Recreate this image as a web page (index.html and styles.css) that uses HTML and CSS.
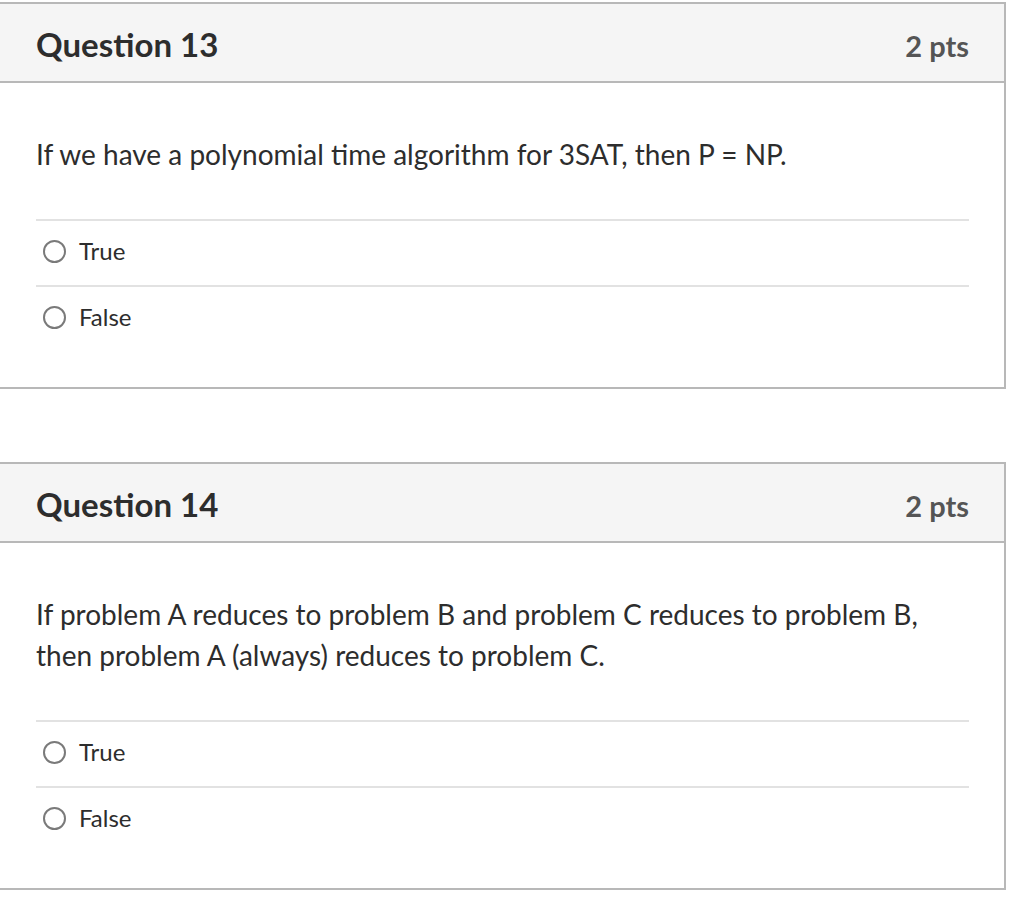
FILE: index.html
```html
<!DOCTYPE html>
<html lang="en">
<head>
<meta charset="utf-8">
<title>Quiz</title>
<link rel="stylesheet" href="styles.css">
</head>
<body>
<main class="quiz">
  <section class="question">
    <header class="question-header">
      <h2 class="question-title">Question 13</h2>
      <span class="question-points">2 pts</span>
    </header>
    <div class="question-body">
      <p class="question-text">If we have a polynomial time algorithm for 3SAT, then P = NP.</p>
      <ul class="answers">
        <li class="answer"><span class="radio"></span><span class="answer-label">True</span></li>
        <li class="answer"><span class="radio"></span><span class="answer-label">False</span></li>
      </ul>
    </div>
  </section>

  <section class="question">
    <header class="question-header">
      <h2 class="question-title">Question 14</h2>
      <span class="question-points">2 pts</span>
    </header>
    <div class="question-body">
      <p class="question-text">If problem A reduces to problem B and problem C reduces to problem B, then problem A (always) reduces to problem C.</p>
      <ul class="answers">
        <li class="answer"><span class="radio"></span><span class="answer-label">True</span></li>
        <li class="answer"><span class="radio"></span><span class="answer-label">False</span></li>
      </ul>
    </div>
  </section>
</main>
</body>
</html>
```
FILE: styles.css
```css
html, body {
  margin: 0;
  padding: 0;
  background: #ffffff;
}

body {
  font-family: Lato, "Open Sans", "Liberation Sans", sans-serif;
  color: #2d2d2d;
}

.quiz {
  padding-top: 2px;
  margin-left: -2px;
  width: 1008px;
  display: flex;
  flex-direction: column;
  gap: 73px;
}

.question {
  border: 2px solid #b8b8b8;
  background: #ffffff;
}

.question-header {
  display: flex;
  justify-content: space-between;
  align-items: baseline;
  height: 79px;
  box-sizing: border-box;
  padding: 20px 35px 0 36px;
  background: #f5f5f5;
  border-bottom: 2px solid #b8b8b8;
}

.question-title {
  margin: 0;
  font-size: 33px;
  line-height: 40px;
  font-weight: 700;
  color: #2d2d2d;
}

.question-points {
  font-size: 29px;
  line-height: 40px;
  font-weight: 700;
  color: #555555;
}

.question-body {
  padding: 51px 35px 36px 36px;
}

.question-text {
  margin: 0 0 44px;
  font-size: 28px;
  line-height: 41px;
}

.answers {
  list-style: none;
  margin: 0;
  padding: 0;
}

.answer {
  display: flex;
  align-items: center;
  gap: 13px;
  border-top: 2px solid #e2e2e2;
  padding: 15px 0 19px 7px;
  font-size: 24px;
  line-height: 30px;
}

.radio {
  width: 23px;
  height: 23px;
  box-sizing: border-box;
  border: 2px solid #7a7a7a;
  border-radius: 50%;
  flex: none;
}
```
